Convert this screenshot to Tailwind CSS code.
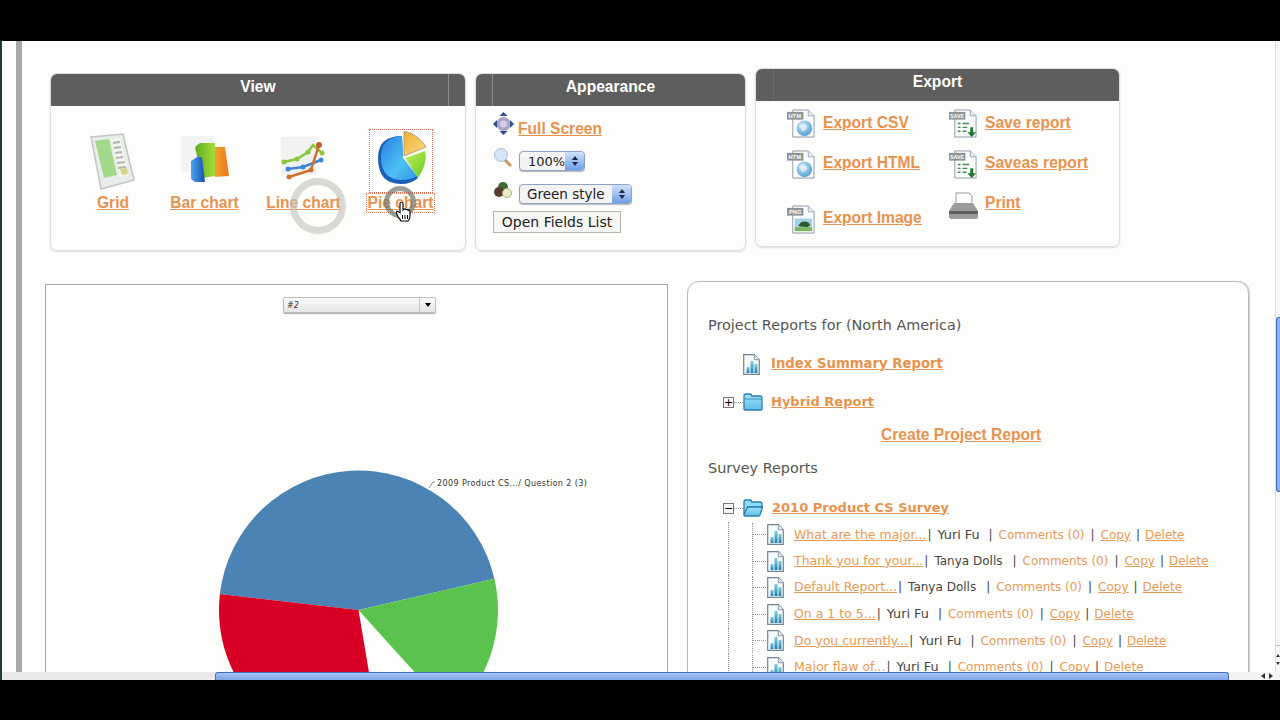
<!DOCTYPE html>
<html lang="en">
  <head>
    <meta charset="UTF-8" />
    <title>Reports</title>
    <script src="https://cdn.jsdelivr.net/npm/@tailwindcss/browser@4"></script>
  </head>
  <body class="bg-black overflow-hidden">
    <!-- shared icons -->
    <svg class="absolute w-0 h-0">
      <defs>
        <linearGradient id="barTeal" x1="0" y1="0" x2="0" y2="1"><stop offset="0" stop-color="#7fd0e6" /><stop offset="1" stop-color="#1f7fa8" /></linearGradient>
        <linearGradient id="folderBlue" x1="0" y1="0" x2="0" y2="1"><stop offset="0" stop-color="#9fe2f8" /><stop offset="1" stop-color="#5fc0ea" /></linearGradient>
        <radialGradient id="globe" cx=".4" cy=".35" r=".8"><stop offset="0" stop-color="#d8eefa" /><stop offset="1" stop-color="#2f8fc8" /></radialGradient>
        <linearGradient id="pieBlue" x1="0" y1="0" x2="1" y2="1"><stop offset="0" stop-color="#2a7fe0" /><stop offset=".6" stop-color="#4fc0f5" /><stop offset="1" stop-color="#2f95e8" /></linearGradient>
        <linearGradient id="pieGold" x1="0" y1="0" x2="1" y2="1"><stop offset="0" stop-color="#f0b030" /><stop offset="1" stop-color="#fcd98a" /></linearGradient>
        <linearGradient id="pieGreen" x1="0" y1="0" x2="1" y2="1"><stop offset="0" stop-color="#c8f060" /><stop offset="1" stop-color="#60c820" /></linearGradient>
        <linearGradient id="barGreen" x1="0" y1="0" x2="1" y2="0"><stop offset="0" stop-color="#5fae1e" /><stop offset="1" stop-color="#a8dc3c" /></linearGradient>
        <linearGradient id="barOrange" x1="0" y1="0" x2="1" y2="0"><stop offset="0" stop-color="#f5a52c" /><stop offset="1" stop-color="#e8761a" /></linearGradient>
        <linearGradient id="barBlue" x1="0" y1="0" x2="1" y2="0"><stop offset="0" stop-color="#4aa6ec" /><stop offset="1" stop-color="#1c4fb0" /></linearGradient>
        <symbol id="report" viewBox="0 0 17 21">
          <path d="M.7.7h10.6l5 5v14.6H.7z" fill="#f8fbfc" stroke="#6f8494" stroke-width="1.2" />
          <path d="M11.3.7v5h5" fill="#e4ecf0" stroke="#8a9aa6" />
          <rect x="3.5" y="13" width="3" height="6" fill="url(#barTeal)" />
          <rect x="7.5" y="7" width="3" height="12" fill="url(#barTeal)" />
          <rect x="11.5" y="10" width="3" height="9" fill="url(#barTeal)" />
        </symbol>
        <symbol id="folder" viewBox="0 0 20 18">
          <path d="M1 16V3q0-2 2-2h4q1.500 0 2 2h8q2 0 2 2v11q0 1-1 1H2q-1 0-1-1z" fill="url(#folderBlue)" stroke="#2b7fae" stroke-width="1.300" />
          <path d="M1.500 6h17" stroke="#2b7fae" stroke-width=".8" />
        </symbol>
        <symbol id="folderOpen" viewBox="0 0 20 18">
          <path d="M1 16V3q0-2 2-2h4q1.500 0 2 2h8q2 0 2 2v3H5z" fill="#8fdcf5" stroke="#2b7fae" stroke-width="1.300" />
          <path d="M1 16 4.500 8H19.500L17 16q-.3 1-1.500 1H2q-1 0-1-1z" fill="url(#folderBlue)" stroke="#2b7fae" stroke-width="1.300" />
        </symbol>
        <symbol id="fileWeb" viewBox="0 0 30 30">
          <path d="M6 1h16l6 6v22H6z" fill="#fbfcfd" stroke="#8c9aa6" />
          <path d="M22 1v6h6" fill="#e6ebef" stroke="#9aa6b0" />
          <rect x="0" y="3" width="17" height="8" fill="#8e9396" />
          <text x="1.500" y="9.500" font-size="6" font-weight="700" fill="#fff" font-family="Liberation Sans, sans-serif">HTM</text>
          <circle cx="18" cy="20" r="8" fill="url(#globe)" />
          <path d="M12 17q5-3 8 0t-4 6" fill="#e8f4fa" fill-opacity=".7" />
        </symbol>
        <symbol id="fileSave" viewBox="0 0 30 30">
          <path d="M6 1h16l6 6v22H6z" fill="#fbfcfd" stroke="#8c9aa6" />
          <path d="M22 1v6h6" fill="#e6ebef" stroke="#9aa6b0" />
          <rect x="0" y="3" width="17" height="8" fill="#8e9396" />
          <text x="1" y="9.500" font-size="5.500" font-weight="700" fill="#fff" font-family="Liberation Sans, sans-serif">SAVE</text>
          <path d="M9 15h3M14 15h7M9 19h3M14 19h5M9 23h3M14 23h4" stroke="#4c8a50" stroke-width="1.500" />
          <path d="M22 19h3v5h3l-4.500 5-4.500-5h3z" fill="#1f7a2c" />
        </symbol>
        <symbol id="filePng" viewBox="0 0 30 30">
          <path d="M6 1h16l6 6v22H6z" fill="#fbfcfd" stroke="#8c9aa6" />
          <path d="M22 1v6h6" fill="#e6ebef" stroke="#9aa6b0" />
          <rect x="0" y="3" width="17" height="8" fill="#8e9396" />
          <text x="2" y="9.500" font-size="6" font-weight="700" fill="#fff" font-family="Liberation Sans, sans-serif">PNG</text>
          <rect x="8" y="14" width="18" height="13" fill="#a6cfe8" />
          <rect x="8" y="23" width="18" height="4" fill="#7cb85a" />
          <path d="M12 22q1-5 6-5t6 4l-3 2z" fill="#2f5a2a" />
        </symbol>
      </defs>
    </svg>

    <div class="h-[41px] bg-black"></div>

    <main class="relative flex h-[639px] overflow-hidden bg-[#fdfefb] font-['Liberation_Sans',sans-serif]">
      <div class="w-[2px] bg-[#1d3d36]"></div>
      <div class="w-[14px]"></div>
      <div class="w-[6px] bg-[#a9a9a9]"></div>

      <div class="flex-1 pt-[27px]">
        <!-- toolbar panels -->
        <section class="flex items-start gap-[9px] pl-[28px]">
          <div class="relative mt-[5px] h-[178px] w-[416px] rounded-[7px] border border-[#dde1dd] shadow-[0_1px_2px_#ddd]">
            <h2 class="flex h-[32px] items-center justify-center rounded-t-[6px] bg-[#5e5e5e] pb-[6px] text-[15.6px] font-bold text-white">View</h2>
            <div class="absolute top-0 right-[16px] h-[32px] w-px bg-[#8d8d8d]"></div>
            <div class="flex items-start pt-[24px] text-[15.6px] font-bold text-[#e8924f] underline">
              <a class="ml-[46px] flex w-[32px] flex-col items-center">
                <svg class="mt-[3px] h-[58px] w-[46px] shrink-0" viewBox="0 0 46 58">
                  <path d="M1 4 33 1l11 46-33 9z" fill="#e9edea" stroke="#c0c6c4" stroke-width="1.500" />
                  <path d="M5 8 19 6l8 36-13 3z" fill="#a4d88a" />
                  <path d="M21 6l9-1 9 38-9 1z" fill="#f4f5ee" />
                  <path d="M23 10l7-1M24 15l7-1M25 20l7-1M26 25l7-1M27 30l8-1M28 35l8-1" stroke="#aeb4ae" stroke-width="2" />
                  <path d="M30 36l7-1 1 6-6 1z" fill="#d4d88a" />
                </svg>
                <span class="whitespace-nowrap">Grid</span>
              </a>
              <a class="ml-[41px] flex w-[69px] flex-col items-center">
                <svg class="mt-[4px] h-[57px] w-[50px] shrink-0" viewBox="0 0 50 57">
                  <rect x="1" y="2" width="33" height="36" fill="#f1f4f3" />
                  <path d="M34 13h11l4 29-14 1z" fill="url(#barOrange)" />
                  <path d="M15 13l5-4h15v33l-13 2z" fill="url(#barGreen)" />
                  <path d="M11 27l6-4h5l3 25H15l-4-3z" fill="url(#barBlue)" />
                </svg>
                <span class="whitespace-nowrap">Bar chart</span>
              </a>
              <a class="ml-[27px] flex w-[75px] flex-col items-center">
                <svg class="mt-[4px] h-[57px] w-[50px] shrink-0" viewBox="0 0 50 57">
                  <rect x="2" y="3" width="35" height="38" fill="#f1f3f2" />
                  <path d="M5 28 18 25 29 18 34 11 43 19" fill="none" stroke="#8cc63c" stroke-width="2.500" />
                  <path d="M9 35 24 33 42 26" fill="none" stroke="#3c86d8" stroke-width="2.500" />
                  <path d="M10 43 32 36 40 11" fill="none" stroke="#d0702c" stroke-width="2.500" />
                  <circle cx="5" cy="28" r="2.500" fill="#8cc63c" /><circle cx="18" cy="25" r="2.500" fill="#8cc63c" /><circle cx="29" cy="18" r="2.500" fill="#8cc63c" /><circle cx="43" cy="19" r="2.500" fill="#8cc63c" />
                  <circle cx="9" cy="35" r="2.500" fill="#3c86d8" /><circle cx="24" cy="33" r="2.500" fill="#3c86d8" /><circle cx="42" cy="26" r="2.500" fill="#3c86d8" />
                  <circle cx="10" cy="43" r="2.500" fill="#d0702c" /><circle cx="32" cy="36" r="2.500" fill="#d0702c" /><circle cx="40" cy="11" r="3" fill="#c0602c" />
                </svg>
                <span class="whitespace-nowrap">Line chart</span>
              </a>
              <a class="relative ml-[26px] flex w-[67px] flex-col items-center">
                <div class="-mt-[1px] flex h-[64px] w-[64px] items-start justify-center border border-dotted border-[#e0705a] pl-[2px] pt-px">
                  <svg class="h-[54px] w-[50px]" viewBox="0 0 50 54">
                    <path d="M25 5Q1 5 1 27Q1 53 24 53Q34 53 41 47L26 27Z" fill="#1a5fb8" />
                    <path d="M25 5Q4 6 4 26Q4 48 24 49Q34 49 40 45L26 27Z" fill="url(#pieBlue)" />
                    <path d="M27 0V25L49 16Q42 4 27 0Z" fill="url(#pieGold)" stroke="#a89070" stroke-width=".8" />
                    <path d="M28 27 48 20Q51 32 41 47Z" fill="url(#pieGreen)" />
                  </svg>
                </div>
                <span class="h-[20px] whitespace-nowrap border border-dotted border-[#e0705a] px-px leading-[18px]">Pie chart</span>
              </a>
            </div>
          </div>

          <div class="relative mt-[5px] h-[178px] w-[271px] rounded-[7px] border border-[#dde1dd] shadow-[0_1px_2px_#ddd]">
            <h2 class="flex h-[32px] items-center justify-center rounded-t-[6px] bg-[#5e5e5e] pb-[6px] text-[15.6px] font-bold text-white">Appearance</h2>
            <div class="absolute top-0 left-[16px] h-[32px] w-px bg-[#8d8d8d]"></div>
            <div class="pl-[17px] pt-[6px] font-['DejaVu_Sans',sans-serif]">
              <a class="flex h-[26px] items-end">
                <svg class="mb-[3px] h-[23px] w-[21px] shrink-0" viewBox="0 0 21 23">
                  <circle cx="10.500" cy="12" r="7" fill="#a9a4c8" />
                  <path d="M10.500 0l4 4h-8zM10.500 23l-4-4h8zM0 12l4-4v8zM21 12l-4 4V8z" fill="#2a4f8c" />
                  <circle cx="10.500" cy="12" r="3.500" fill="#d4cfe4" />
                </svg>
                <span class="-mb-px ml-[4px] font-['Liberation_Sans',sans-serif] text-[15.6px] font-bold leading-[20px] text-[#e8924f] underline">Full Screen</span>
              </a>
              <div class="mt-[12px] flex h-[26px] items-start">
                <svg class="-mt-[2px] h-[20px] w-[20px] shrink-0" viewBox="0 0 20 20">
                  <circle cx="8" cy="7" r="6.500" fill="#d4e6f6" stroke="#a8c0d8" />
                  <path d="M12 12l6 6" stroke="#c89a60" stroke-width="3" />
                </svg>
                <div class="ml-[6px] mt-[1px] flex h-[20px] w-[66px] overflow-hidden rounded-[4px] border border-[#8ea4c4] bg-[#f4f4f4] shadow-[0_1px_1px_#bbb]">
                  <span class="w-[45px] pl-[8px] text-[13px] leading-[19px] text-[#222]">100%</span>
                  <span class="flex flex-1 flex-col items-center justify-center gap-[2px] bg-[linear-gradient(#cfe2fa,#6fa0e8)]">
                    <i class="h-0 w-0 border-x-[3px] border-b-[4px] border-x-transparent border-b-[#1a2a44]"></i>
                    <i class="h-0 w-0 border-x-[3px] border-t-[4px] border-x-transparent border-t-[#1a2a44]"></i>
                  </span>
                </div>
              </div>
              <div class="mt-[8px] flex h-[20px] items-start">
                <svg class="-mt-[3px] h-[20px] w-[20px] shrink-0" viewBox="0 0 20 20">
                  <circle cx="10" cy="6" r="5" fill="#3f6a34" />
                  <circle cx="6" cy="11" r="5" fill="#5a3a2a" />
                  <circle cx="14" cy="12" r="4.500" fill="#e8edc8" stroke="#a8b080" />
                </svg>
                <div class="ml-[6px] flex h-[20px] w-[113px] overflow-hidden rounded-[4px] border border-[#8ea4c4] bg-[#f4f4f4] shadow-[0_1px_1px_#bbb]">
                  <span class="w-[92px] pl-[7px] text-[13.5px] leading-[19px] text-[#222]">Green style</span>
                  <span class="flex flex-1 flex-col items-center justify-center gap-[2px] bg-[linear-gradient(#cfe2fa,#6fa0e8)]">
                    <i class="h-0 w-0 border-x-[3px] border-b-[4px] border-x-transparent border-b-[#1a2a44]"></i>
                    <i class="h-0 w-0 border-x-[3px] border-t-[4px] border-x-transparent border-t-[#1a2a44]"></i>
                  </span>
                </div>
              </div>
              <button class="mt-[7px] h-[22px] w-[128px] border border-[#b4b4b0] bg-[#f6f6f4] text-[14px] leading-[20px] text-[#222]">Open Fields List</button>
            </div>
          </div>

          <div class="relative h-[179px] w-[365px] rounded-[7px] border border-[#dde1dd] shadow-[0_1px_2px_#ddd]">
            <h2 class="flex h-[32px] items-center justify-center rounded-t-[6px] bg-[#5e5e5e] pb-[6px] text-[15.6px] font-bold text-white">Export</h2>
            <div class="absolute top-0 left-[17px] h-[32px] w-px bg-[#6e6e6e]"></div>
            <div class="flex pl-[31px] pt-[8px] text-[15.6px] font-bold text-[#e8924f]">
              <div class="w-[162px]">
                <a class="flex h-[41px] items-start gap-[7px]"><svg class="h-[29px] w-[29px] shrink-0"><use href="#fileWeb" /></svg><span class="mt-[2px] underline">Export CSV</span></a>
                <a class="flex h-[55px] items-start gap-[7px]"><svg class="h-[29px] w-[29px] shrink-0"><use href="#fileWeb" /></svg><span class="mt-[1px] underline">Export HTML</span></a>
                <a class="flex items-start gap-[7px]"><svg class="h-[29px] w-[29px] shrink-0"><use href="#filePng" /></svg><span class="mt-[1px] underline">Export Image</span></a>
              </div>
              <div>
                <a class="flex h-[41px] items-start gap-[7px]"><svg class="h-[29px] w-[29px] shrink-0"><use href="#fileSave" /></svg><span class="mt-[2px] underline">Save report</span></a>
                <a class="flex h-[42px] items-start gap-[7px]"><svg class="h-[29px] w-[29px] shrink-0"><use href="#fileSave" /></svg><span class="mt-[1px] underline">Saveas report</span></a>
                <a class="flex items-start gap-[7px]">
                  <svg class="h-[27px] w-[29px] shrink-0" viewBox="0 0 29 27">
                    <path d="M7 1h13l3 3v9H7z" fill="#fbfbfb" stroke="#9a9a9a" />
                    <path d="M5 11h19l5 8v6q0 2-2 2H2q-2 0-2-2v-6z" fill="#9a9c9c" />
                    <path d="M0 19h29v3H0z" fill="#5e6062" />
                  </svg>
                  <span class="-mt-[1px] underline">Print</span>
                </a>
              </div>
            </div>
          </div>
        </section>

        <section class="mt-[30px] flex items-start pl-[23px]">
          <!-- pie chart panel -->
          <div class="relative mt-[3px] h-[500px] w-[623px] border border-[#a8a8a8]">
            <svg class="absolute left-0 top-0 h-[500px] w-[621px]" viewBox="46 285 621 500">
              <path d="M358.500 610 219.900 594A139.500 139.500 0 0 1 494.400 578.700Z" fill="#4c83b5" />
              <path d="M358.500 610 219.900 594A139.500 139.500 0 0 0 381.600 747.600Z" fill="#d80024" />
              <path d="M358.500 610 494.400 578.700A139.500 139.500 0 0 1 452 713.600Z" fill="#5ac34e" />
              <path d="M429 488l4-6h2" fill="none" stroke="#888" />
              <text x="437" y="486" font-size="8" letter-spacing=".4" fill="#333" font-family="DejaVu Sans, sans-serif">2009 Product CS.../ Question 2 (3)</text>
            </svg>
            <div class="relative ml-[237px] mt-[12px] flex h-[16px] w-[153px] rounded-[2px] border border-[#bdbdbd] bg-[linear-gradient(#fafafa,#e6e6e6)] shadow-[0_1px_1px_#aaa]">
              <span class="flex-1 pl-[3px] font-['DejaVu_Sans',sans-serif] text-[8px] italic leading-[15px] text-[#333]">#2</span>
              <span class="flex w-[16px] items-center justify-center border-l border-[#c4c4c4]"><i class="h-0 w-0 border-x-[3px] border-t-[4px] border-x-transparent border-t-black"></i></span>
            </div>
          </div>

          <!-- reports panel -->
          <div class="ml-[19px] h-[700px] w-[562px] rounded-t-[12px] border border-[#b8b8b8] pl-[20px] pt-[31px] font-['DejaVu_Sans',sans-serif] shadow-[1px_0_1px_#ccc]">
            <h3 class="h-[24px] text-[14.4px] leading-[24px] text-[#555]">Project Reports for (North America)</h3>
            <a class="ml-[35px] mt-[14px] flex h-[26px] items-center">
              <svg class="h-[21px] w-[17px] shrink-0"><use href="#report" /></svg>
              <span class="ml-[11px] text-[13.25px] font-bold text-[#e8924f] underline">Index Summary Report</span>
            </a>
            <div class="ml-[15px] mt-[12px] flex h-[26px] items-center">
              <span class="flex h-[11px] w-[11px] items-center justify-center border border-[#777] bg-[#f4f4f4] text-[11px] leading-none text-black">+</span>
              <span class="w-[9px] border-t border-dotted border-[#999]"></span>
              <svg class="h-[18px] w-[20px] shrink-0"><use href="#folder" /></svg>
              <a class="ml-[8px] text-[13px] font-bold text-[#e8924f] underline">Hybrid Report</a>
            </div>
            <div class="mt-[8px] h-[24px] pl-[173px] font-['Liberation_Sans',sans-serif] text-[15.6px] font-bold leading-[24px] text-[#e8924f] underline">Create Project Report</div>
            <h3 class="mt-[9px] h-[24px] text-[14.4px] leading-[24px] text-[#555]">Survey Reports</h3>
            <div class="ml-[15px] mt-[15px] flex h-[26px] items-center">
              <span class="flex h-[11px] w-[11px] items-center justify-center border border-[#777] bg-[#f4f4f4] text-[11px] leading-none text-black">−</span>
              <span class="w-[9px] border-t border-dotted border-[#999]"></span>
              <svg class="h-[18px] w-[20px] shrink-0"><use href="#folderOpen" /></svg>
              <a class="ml-[9px] text-[13px] font-bold text-[#e8924f] underline">2010 Product CS Survey</a>
            </div>

            <ul class="mt-[.5px] text-[12px] text-[#444]">
              <li class="ml-[20px] flex h-[26.5px]">
                <div class="w-[24px] border-l border-dotted border-[#999]"></div>
                <div class="my-[1px] flex w-[15px] items-center border-l border-dotted border-[#999]"><span class="w-[13px] border-t border-dotted border-[#999]"></span></div>
                <div class="flex items-center"><svg class="h-[21px] w-[17px] shrink-0"><use href="#report" /></svg>
                  <p class="ml-[10px] whitespace-nowrap"><a class="text-[12.5px] text-[#e79a55] underline">What are the major...</a><span class="ml-px mr-[6px]">|</span><span class="text-[12.8px]">Yuri Fu</span><span class="ml-[9px] mr-[6px]">|</span><span class="text-[#e79a55]">Comments (0)</span><span class="mx-[6px]">|</span><a class="text-[#e79a55] underline">Copy</a><span class="mx-[5px]">|</span><a class="text-[#e79a55] underline">Delete</a></p>
                </div>
              </li>
              <li class="ml-[20px] flex h-[26.5px]">
                <div class="w-[24px] border-l border-dotted border-[#999]"></div>
                <div class="my-[1px] flex w-[15px] items-center border-l border-dotted border-[#999]"><span class="w-[13px] border-t border-dotted border-[#999]"></span></div>
                <div class="flex items-center"><svg class="h-[21px] w-[17px] shrink-0"><use href="#report" /></svg>
                  <p class="ml-[10px] whitespace-nowrap"><a class="text-[12.5px] text-[#e79a55] underline">Thank you for your...</a><span class="ml-px mr-[6px]">|</span>Tanya Dolls<span class="ml-[10px] mr-[6px]">|</span><span class="text-[#e79a55]">Comments (0)</span><span class="mx-[6px]">|</span><a class="text-[#e79a55] underline">Copy</a><span class="mx-[5px]">|</span><a class="text-[#e79a55] underline">Delete</a></p>
                </div>
              </li>
              <li class="ml-[20px] flex h-[26.5px]">
                <div class="w-[24px] border-l border-dotted border-[#999]"></div>
                <div class="my-[1px] flex w-[15px] items-center border-l border-dotted border-[#999]"><span class="w-[13px] border-t border-dotted border-[#999]"></span></div>
                <div class="flex items-center"><svg class="h-[21px] w-[17px] shrink-0"><use href="#report" /></svg>
                  <p class="ml-[10px] whitespace-nowrap"><a class="text-[12.5px] text-[#e79a55] underline">Default Report...</a><span class="ml-px mr-[6px]">|</span>Tanya Dolls<span class="ml-[10px] mr-[6px]">|</span><span class="text-[#e79a55]">Comments (0)</span><span class="mx-[6px]">|</span><a class="text-[#e79a55] underline">Copy</a><span class="mx-[5px]">|</span><a class="text-[#e79a55] underline">Delete</a></p>
                </div>
              </li>
              <li class="ml-[20px] flex h-[26.5px]">
                <div class="w-[24px] border-l border-dotted border-[#999]"></div>
                <div class="my-[1px] flex w-[15px] items-center border-l border-dotted border-[#999]"><span class="w-[13px] border-t border-dotted border-[#999]"></span></div>
                <div class="flex items-center"><svg class="h-[21px] w-[17px] shrink-0"><use href="#report" /></svg>
                  <p class="ml-[10px] whitespace-nowrap"><a class="text-[12.5px] text-[#e79a55] underline">On a 1 to 5...</a><span class="ml-px mr-[6px]">|</span><span class="text-[12.8px]">Yuri Fu</span><span class="ml-[9px] mr-[6px]">|</span><span class="text-[#e79a55]">Comments (0)</span><span class="mx-[6px]">|</span><a class="text-[#e79a55] underline">Copy</a><span class="mx-[5px]">|</span><a class="text-[#e79a55] underline">Delete</a></p>
                </div>
              </li>
              <li class="ml-[20px] flex h-[26.5px]">
                <div class="w-[24px] border-l border-dotted border-[#999]"></div>
                <div class="my-[1px] flex w-[15px] items-center border-l border-dotted border-[#999]"><span class="w-[13px] border-t border-dotted border-[#999]"></span></div>
                <div class="flex items-center"><svg class="h-[21px] w-[17px] shrink-0"><use href="#report" /></svg>
                  <p class="ml-[10px] whitespace-nowrap"><a class="text-[12.5px] text-[#e79a55] underline">Do you currently...</a><span class="ml-px mr-[6px]">|</span><span class="text-[12.8px]">Yuri Fu</span><span class="ml-[9px] mr-[6px]">|</span><span class="text-[#e79a55]">Comments (0)</span><span class="mx-[6px]">|</span><a class="text-[#e79a55] underline">Copy</a><span class="mx-[5px]">|</span><a class="text-[#e79a55] underline">Delete</a></p>
                </div>
              </li>
              <li class="ml-[20px] flex h-[26.5px]">
                <div class="w-[24px] border-l border-dotted border-[#999]"></div>
                <div class="my-[1px] flex w-[15px] items-center border-l border-dotted border-[#999]"><span class="w-[13px] border-t border-dotted border-[#999]"></span></div>
                <div class="flex items-center"><svg class="h-[21px] w-[17px] shrink-0"><use href="#report" /></svg>
                  <p class="ml-[10px] whitespace-nowrap"><a class="text-[12.5px] text-[#e79a55] underline">Major flaw of...</a><span class="ml-px mr-[6px]">|</span><span class="text-[12.8px]">Yuri Fu</span><span class="ml-[9px] mr-[6px]">|</span><span class="text-[#e79a55]">Comments (0)</span><span class="mx-[6px]">|</span><a class="text-[#e79a55] underline">Copy</a><span class="mx-[5px]">|</span><a class="text-[#e79a55] underline">Delete</a></p>
                </div>
              </li>
            </ul>
          </div>
        </section>
      </div>

      <!-- click rings and pointer over the toolbar -->
      <div class="absolute left-[290px] top-[137px] h-[56px] w-[56px] rounded-full border-[7px] border-[#bfc2ba]/60"></div>
      <div class="absolute left-[384px] top-[145px] h-[32px] w-[32px] rounded-full border-[5px] border-[#6f766a]/70"></div>
      <svg class="absolute left-[396px] top-[161px] h-[20px] w-[15px]" viewBox="0 0 15 20">
        <path d="M4 2q0-2 1.500-2T7 2v6l1-1q1.500-.5 2 .5 1.500-.5 2 .7 1.500-.3 2 1V14q0 3-2 5H5q-1-2-3-4L.5 11q-.5-2 1.500-1.500L4 11z" fill="#fff" stroke="#000" stroke-width="1.100" />
        <path d="M6.500 13v4M9 13v4M11.500 13v4" stroke="#000" />
      </svg>

      <!-- scrollbars -->
      <div class="absolute bottom-0 left-[2px] right-0 flex h-[8px] bg-[#e9e9e7]">
        <div class="ml-[213px] h-full w-[1014px] rounded-t-[3px] border-t border-x border-[#3f6fbf] bg-[linear-gradient(#a6c3f2,#7ea4e6)]"></div>
        <div class="flex flex-1 items-center justify-end gap-[4px] bg-[#f4f4f2] pr-[7px]">
          <i class="h-0 w-0 border-y-[3px] border-r-[4px] border-y-transparent border-r-[#333]"></i>
          <i class="h-0 w-0 border-y-[3px] border-l-[4px] border-y-transparent border-l-[#333]"></i>
        </div>
      </div>
      <div class="absolute right-0 top-0 flex h-[631px] w-[5px] flex-col justify-between border-l border-[#dcdcdc] bg-[#f6f6f4]">
        <div class="mt-[276px] h-[175px] rounded-l-[3px] border border-[#3f6fbf] border-r-0 bg-[#8fb0ea]"></div>
        <div class="flex h-[27px] flex-col items-center justify-center gap-[5px] border-t border-[#bbb]">
          <i class="h-0 w-0 border-x-[2px] border-b-[3px] border-x-transparent border-b-[#333]"></i>
          <i class="h-0 w-0 border-x-[2px] border-t-[3px] border-x-transparent border-t-[#333]"></i>
        </div>
      </div>
    </main>

    <div class="h-[40px] bg-black"></div>
  </body>
</html>
